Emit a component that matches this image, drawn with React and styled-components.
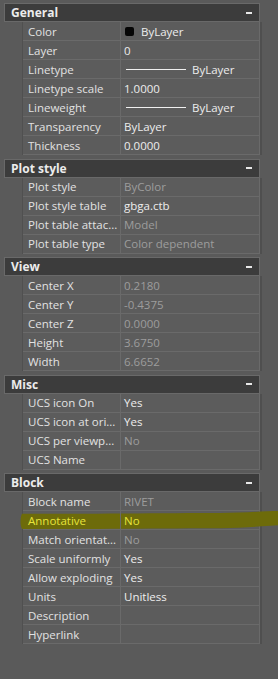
import React from "react";
import styled, { createGlobalStyle } from "styled-components";

const sections = [
  {
    title: "General",
    rows: [
      { label: "Color", value: "ByLayer", kind: "color" },
      { label: "Layer", value: "0" },
      { label: "Linetype", value: "ByLayer", kind: "line" },
      { label: "Linetype scale", value: "1.0000" },
      { label: "Lineweight", value: "ByLayer", kind: "line" },
      { label: "Transparency", value: "ByLayer" },
      { label: "Thickness", value: "0.0000" }
    ]
  },
  {
    title: "Plot style",
    rows: [
      { label: "Plot style", value: "ByColor", muted: true },
      { label: "Plot style table", value: "gbga.ctb" },
      { label: "Plot table attac...", value: "Model", muted: true },
      { label: "Plot table type", value: "Color dependent", muted: true }
    ]
  },
  {
    title: "View",
    rows: [
      { label: "Center X", value: "0.2180", muted: true },
      { label: "Center Y", value: "-0.4375", muted: true },
      { label: "Center Z", value: "0.0000", muted: true },
      { label: "Height", value: "3.6750", muted: true },
      { label: "Width", value: "6.6652", muted: true }
    ]
  },
  {
    title: "Misc",
    rows: [
      { label: "UCS icon On", value: "Yes" },
      { label: "UCS icon at ori...", value: "Yes" },
      { label: "UCS per viewp...", value: "No", muted: true },
      { label: "UCS Name", value: "" }
    ]
  },
  {
    title: "Block",
    rows: [
      { label: "Block name", value: "RIVET", muted: true },
      { label: "Annotative", value: "No", marked: true },
      { label: "Match orientat...", value: "No", muted: true },
      { label: "Scale uniformly", value: "Yes" },
      { label: "Allow exploding", value: "Yes" },
      { label: "Units", value: "Unitless" },
      { label: "Description", value: "" },
      { label: "Hyperlink", value: "" }
    ]
  }
];

class App extends React.Component {
  renderValue = row => {
    if (row.kind === "color")
      return (
        <>
          <Swatch />
          {row.value}
        </>
      );
    if (row.kind === "line")
      return (
        <>
          <LineSample />
          {row.value}
        </>
      );
    return row.value;
  };

  render() {
    return (
      <Panel>
        <GlobalStyle />
        {sections.map(section => (
          <Section key={section.title}>
            <SectionHeader>
              <span>{section.title}</span>
              <Collapse />
            </SectionHeader>
            <Rows>
              {section.rows.map(row => (
                <Row key={row.label}>
                  {row.marked && <Marker />}
                  <Label marked={row.marked}>{row.label}</Label>
                  <Value muted={row.muted} marked={row.marked}>
                    {this.renderValue(row)}
                  </Value>
                </Row>
              ))}
            </Rows>
          </Section>
        ))}
      </Panel>
    );
  }
}

export default App;

// hand-drawn highlighter stroke over the Annotative row
const Marker = () => (
  <MarkerSvg viewBox="0 0 258 21" preserveAspectRatio="none">
    <path
      d="M2 3 C60 3 150 2 200 2 C225 2 245 0 258 0 L258 15 C240 16 222 18 200 18 C150 18 60 19 2 19 C0 15 0 7 2 3 Z"
      fill="#6d6b0a"
    />
  </MarkerSvg>
);

const GlobalStyle = createGlobalStyle`
  html, body {
    margin: 0;
    background: #5a5a5a;
    overflow: hidden;
  }
  body {
    font-family: "Open Sans", "Noto Sans", sans-serif;
    font-size: 11.5px;
  }
`;

const Panel = styled.div`
  display: flex;
  flex-direction: column;
  gap: 3.5px;
  width: 256px;
  padding: 3px 0 0 4px;
  height: 676px;
`;

const Section = styled.div`
  display: flex;
  flex-direction: column;
`;

const SectionHeader = styled.div`
  box-sizing: border-box;
  height: 19px;
  display: flex;
  align-items: center;
  justify-content: space-between;
  padding: 0 7px 0 6px;
  background: #3c3c3c;
  border: 1px solid #696969;
  color: #ececec;
  font-weight: 700;
  font-size: 12px;
`;

const Collapse = styled.span`
  width: 6px;
  height: 2px;
  background: #e8e8e8;
`;

const Rows = styled.div`
  margin-left: 18px;
  border-left: 1px solid #505050;
  border-right: 1px solid #6a6a6a;
  box-shadow: 2px 0 0 #4f4f4f;
`;

const Row = styled.div`
  position: relative;
  display: grid;
  grid-template-columns: 98px 1fr;
  height: 19px;
  box-sizing: border-box;
  border-bottom: 1px solid #6a6a6a;
  background: #5c5c5c;
`;

const MarkerSvg = styled.svg`
  position: absolute;
  left: -3px;
  top: 0;
  width: 258px;
  height: 20px;
`;

const Label = styled.div`
  position: relative;
  display: flex;
  align-items: center;
  padding-left: 5px;
  border-right: 1px solid #6a6a6a;
  color: ${props => (props.marked ? "#e6e43a" : "#e2e2e2")};
  white-space: nowrap;
  overflow: hidden;
`;

const Value = styled.div`
  position: relative;
  display: flex;
  align-items: center;
  padding-left: 3px;
  color: ${props =>
    props.marked ? "#e6e43a" : props.muted ? "#9c9c9c" : "#ededed"};
  white-space: nowrap;
  overflow: hidden;
`;

const Swatch = styled.span`
  width: 9px;
  height: 9px;
  margin: 0 7px 0 1px;
  border-radius: 2px;
  background: #050505;
`;

const LineSample = styled.span`
  width: 60px;
  height: 1px;
  margin: 0 6px 0 2px;
  background: #f0f0f0;
`;
